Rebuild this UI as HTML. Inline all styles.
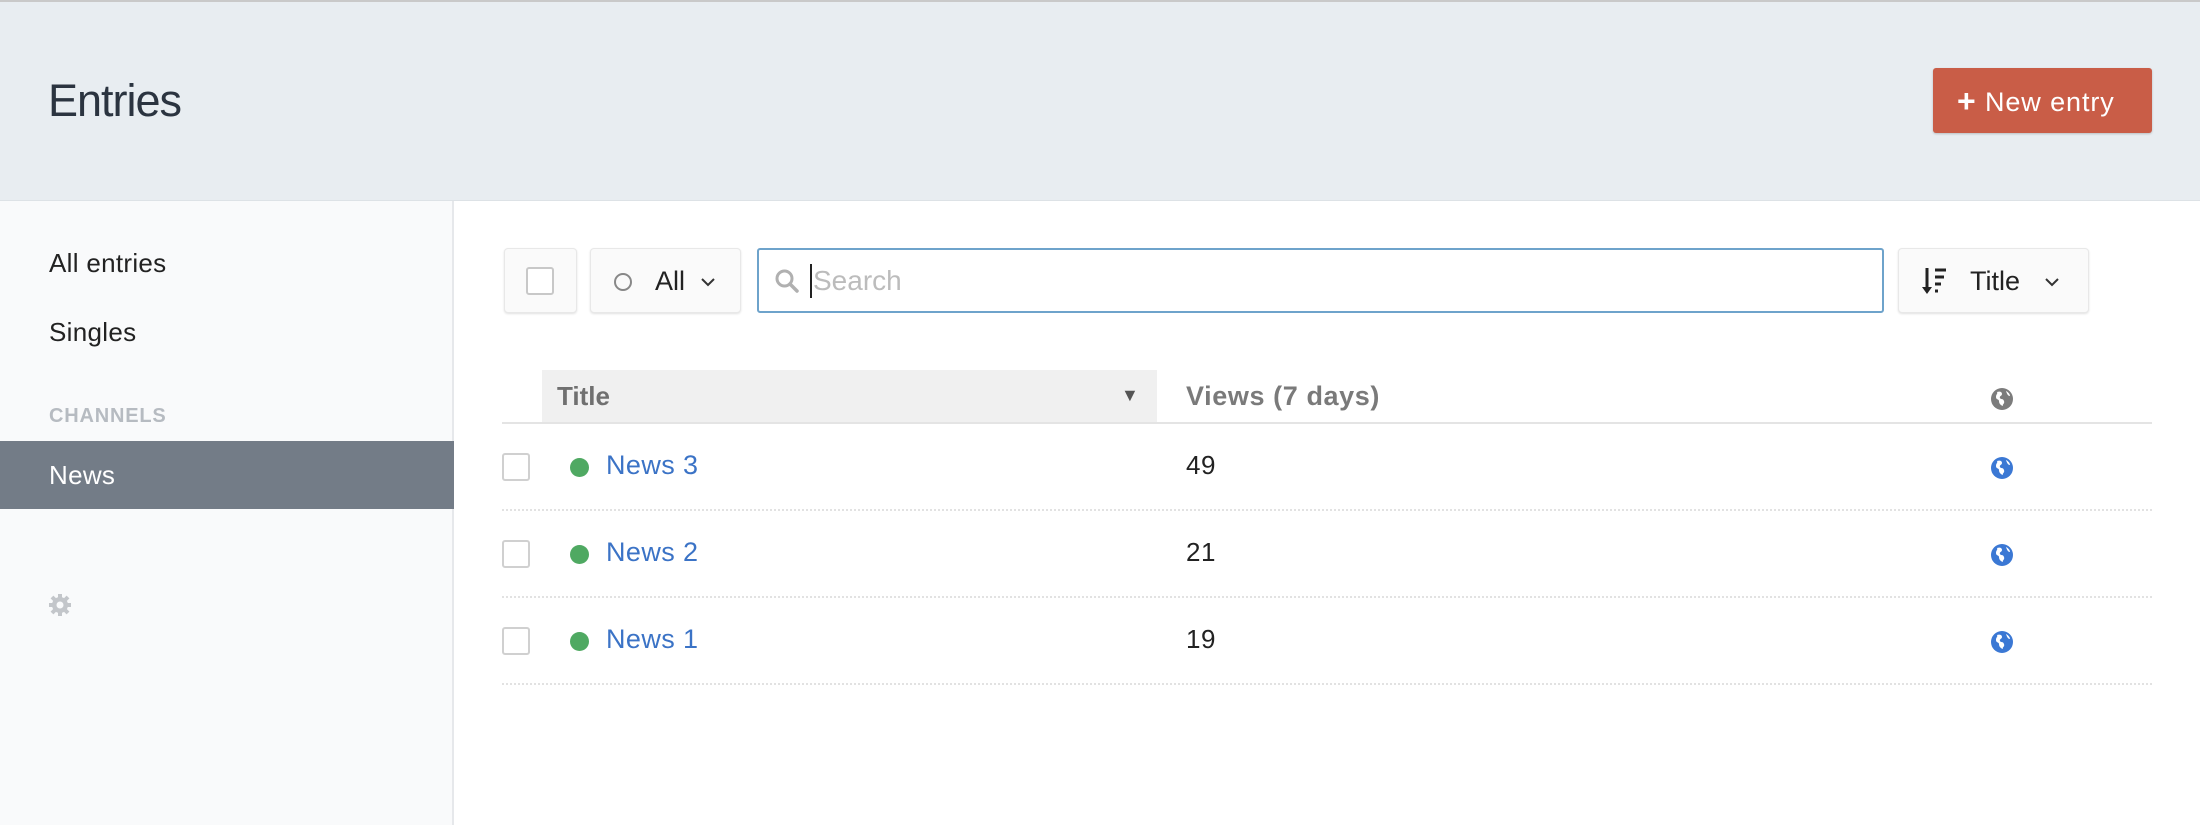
<!DOCTYPE html>
<html><head><meta charset="utf-8"><style>
*{box-sizing:border-box;margin:0;padding:0}
body{width:2200px;height:825px;overflow:hidden;background:#fff;font-family:"Liberation Sans",Arial,sans-serif;position:relative}
.a{position:absolute}
.hdr{left:0;top:0;width:2200px;height:201px;background:#e8edf1;border-top:2px solid #c9c9c9;border-bottom:1px solid #dde2e6}
.side{left:0;top:201px;width:454px;height:624px;background:#f9fafb;border-right:2px solid #e6e8eb}
.btn{background:#fafafa;border:1px solid #e8e8e8;border-radius:4px;box-shadow:0 1px 2px rgba(0,0,0,.12)}
.cb{width:28px;height:28px;border:2px solid #d0d0d0;border-radius:3px;background:#fff}
.row{left:502px;width:1650px;height:0;border-top:2px dotted #e2e2e2}
.dot{width:19px;height:19px;border-radius:50%;background:#4fa962}
.news{font-size:27px;color:#3b73c6;letter-spacing:0.4px}
.num{font-size:26px;color:#222;letter-spacing:0.5px}
</style></head><body>
<div class="a hdr"></div>
<div class="a" style="left:48px;top:75px;font-size:45px;color:#2b3440;letter-spacing:-1px">Entries</div>
<div class="a" style="left:1933px;top:68px;width:219px;height:65px;background:#c95d47;border-radius:3px;box-shadow:0 1px 2px rgba(0,0,0,.2);color:#fff;font-size:27px;line-height:65px;padding-left:24px;letter-spacing:0.9px">
<span style="font-weight:bold;font-size:32px;position:relative;top:1px">+</span> New entry</div>

<div class="a side"></div>
<div class="a" style="left:49px;top:248px;font-size:26px;color:#222;letter-spacing:0.3px">All entries</div>
<div class="a" style="left:49px;top:317px;font-size:26px;color:#222;letter-spacing:0.3px">Singles</div>
<div class="a" style="left:49px;top:405px;font-size:20px;font-weight:bold;color:#b6bbc1;letter-spacing:0.8px">CHANNELS</div>
<div class="a" style="left:0;top:441px;width:454px;height:68px;background:#737c87;color:#fff;font-size:26px;line-height:68px;padding-left:49px;letter-spacing:0.3px">News</div>
<svg class="a" style="left:48px;top:593px" width="24" height="24" viewBox="0 0 24 24"><g fill="#c3c6ca"><circle cx="12" cy="12" r="8"/><g stroke="#c3c6ca" stroke-width="4"><line x1="12" y1="1" x2="12" y2="23"/><line x1="1" y1="12" x2="23" y2="12"/><line x1="4" y1="4" x2="20" y2="20"/><line x1="20" y1="4" x2="4" y2="20"/></g><circle cx="12" cy="12" r="3.5" fill="#f9fafb"/></g></svg>

<div class="a btn" style="left:504px;top:248px;width:73px;height:65px"></div>
<div class="a cb" style="left:526px;top:267px;border-color:#c8c8c8"></div>
<div class="a btn" style="left:590px;top:248px;width:151px;height:65px"></div>
<div class="a" style="left:614px;top:273px;width:18px;height:18px;border:2px solid #888;border-radius:50%"></div>
<div class="a" style="left:655px;top:266px;font-size:27px;color:#222">All</div>
<svg class="a" style="left:700px;top:276px" width="16" height="12" viewBox="0 0 16 12"><path d="M2 3l6 6 6-6" fill="none" stroke="#333" stroke-width="2"/></svg>
<div class="a" style="left:757px;top:248px;width:1127px;height:65px;border:2px solid #6ea3cb;border-radius:3px;background:#fff"></div>
<svg class="a" style="left:774px;top:268px" width="26" height="26" viewBox="0 0 26 26"><circle cx="10.5" cy="10.5" r="7.5" fill="none" stroke="#b0b0b0" stroke-width="3"/><path d="M16 16l7 7" stroke="#b0b0b0" stroke-width="3.5" stroke-linecap="round"/></svg>
<div class="a" style="left:810px;top:264px;width:2px;height:34px;background:#222"></div>
<div class="a" style="left:813px;top:265px;font-size:28px;color:#bcbcbc">Search</div>
<div class="a btn" style="left:1898px;top:248px;width:191px;height:65px"></div>
<svg class="a" style="left:1922px;top:266px" width="30" height="32" viewBox="0 0 30 32"><path d="M5 2v24" stroke="#222" stroke-width="3"/><path d="M0 21l5 7 5-7z" fill="#222"/><path d="M13 4h11M13 11h9M13 18h6M13 25h3" stroke="#222" stroke-width="3"/></svg>
<div class="a" style="left:1970px;top:266px;font-size:27px;color:#222">Title</div>
<svg class="a" style="left:2044px;top:276px" width="16" height="12" viewBox="0 0 16 12"><path d="M2 3l6 6 6-6" fill="none" stroke="#333" stroke-width="2"/></svg>

<div class="a" style="left:542px;top:370px;width:615px;height:53px;background:#f0f0f0"></div>
<div class="a" style="left:557px;top:381px;font-size:26px;font-weight:bold;color:#707070">Title</div>
<div class="a" style="left:1121px;top:385px;font-size:18px;color:#555">▼</div>
<div class="a" style="left:1186px;top:381px;font-size:27px;font-weight:bold;color:#7a7a7a;letter-spacing:0.6px">Views (7 days)</div>
<svg class="a" style="left:1990px;top:386px" width="24" height="26" viewBox="0 0 24 24"><circle cx="12" cy="12" r="11" fill="#7c7c7c"/><path d="M7 5c3-1 5 0 5 2s-3 2-2 4 3 0 4 3-2 3-1 5c-3-1-4-3-4-5s-3-1-3-4 2-3 1-5z M16 4c2 1 4 3 4 5-2 0-3-2-4-5z" fill="#fff"/></svg>
<div class="a" style="left:502px;top:422px;width:1650px;height:2px;background:#e4e4e4"></div>

<div class="a cb" style="left:502px;top:453px"></div>
<div class="a dot" style="left:570px;top:458px"></div>
<div class="a news" style="left:606px;top:450px">News 3</div>
<div class="a num" style="left:1186px;top:450px">49</div>
<svg class="a" style="left:1990px;top:456px" width="24" height="24" viewBox="0 0 24 24"><circle cx="12" cy="12" r="11" fill="#3b78d4"/><path d="M7 5c3-1 5 0 5 2s-3 2-2 4 3 0 4 3-2 3-1 5c-3-1-4-3-4-5s-3-1-3-4 2-3 1-5z M16 4c2 1 4 3 4 5-2 0-3-2-4-5z" fill="#fff"/></svg>
<div class="a row" style="top:509px"></div>

<div class="a cb" style="left:502px;top:540px"></div>
<div class="a dot" style="left:570px;top:545px"></div>
<div class="a news" style="left:606px;top:537px">News 2</div>
<div class="a num" style="left:1186px;top:537px">21</div>
<svg class="a" style="left:1990px;top:543px" width="24" height="24" viewBox="0 0 24 24"><circle cx="12" cy="12" r="11" fill="#3b78d4"/><path d="M7 5c3-1 5 0 5 2s-3 2-2 4 3 0 4 3-2 3-1 5c-3-1-4-3-4-5s-3-1-3-4 2-3 1-5z M16 4c2 1 4 3 4 5-2 0-3-2-4-5z" fill="#fff"/></svg>
<div class="a row" style="top:596px"></div>

<div class="a cb" style="left:502px;top:627px"></div>
<div class="a dot" style="left:570px;top:632px"></div>
<div class="a news" style="left:606px;top:624px">News 1</div>
<div class="a num" style="left:1186px;top:624px">19</div>
<svg class="a" style="left:1990px;top:630px" width="24" height="24" viewBox="0 0 24 24"><circle cx="12" cy="12" r="11" fill="#3b78d4"/><path d="M7 5c3-1 5 0 5 2s-3 2-2 4 3 0 4 3-2 3-1 5c-3-1-4-3-4-5s-3-1-3-4 2-3 1-5z M16 4c2 1 4 3 4 5-2 0-3-2-4-5z" fill="#fff"/></svg>
<div class="a row" style="top:683px"></div>
</body></html>
